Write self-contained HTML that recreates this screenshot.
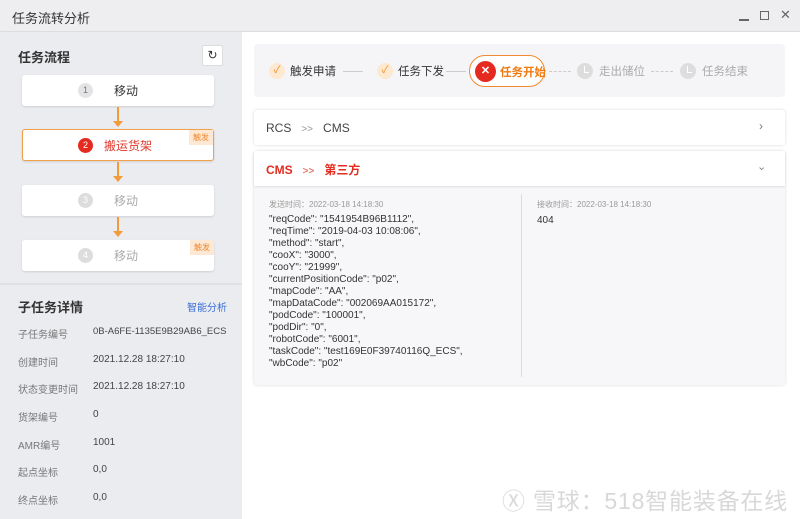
<!DOCTYPE html><html><head><meta charset="utf-8"><style>
*{margin:0;padding:0;box-sizing:border-box}
html,body{width:800px;height:519px;overflow:hidden}
body{background:#fff;font-family:"Liberation Sans","Noto Sans CJK SC",sans-serif;position:relative;color:#333}
.a{position:absolute;white-space:nowrap}
.card{position:absolute;left:22px;width:192px;height:31px;background:#fff;border-radius:3px;box-shadow:0 1px 2px rgba(0,0,0,.12);font-size:12px}
.num{position:absolute;left:56px;top:8px;width:15px;height:15px;border-radius:50%;background:#e4e4e6;color:#777;font-size:9px;text-align:center;line-height:15px}
.ct{position:absolute;left:92px;top:7px}
.tag{position:absolute;right:0;top:0;background:#fde8d4;color:#f08a30;font-size:8px;padding:2px 4px}
.arr{position:absolute;left:117px;width:1.5px;background:#f39a3a}
.ah{position:absolute;left:113px;width:0;height:0;border-left:5px solid transparent;border-right:5px solid transparent;border-top:6px solid #f39a3a}
.lb{position:absolute;left:18px;font-size:10px;color:#777;white-space:nowrap}
.vl{position:absolute;left:93px;font-size:10px;color:#444;white-space:nowrap}
.st{position:absolute;top:63px;font-size:11.5px;display:flex;align-items:center;white-space:nowrap}
.ck{width:16px;height:16px;border-radius:50%;background:#fde8d0;color:#f08a20;font-size:10px;text-align:center;line-height:16px;margin-right:5px}
.gc{width:16px;height:16px;border-radius:50%;background:#ddd;margin-right:6px;position:relative}
.gc:after{content:"";position:absolute;left:7px;top:3px;width:4px;height:6px;border-left:1.5px solid #fff;border-bottom:1.5px solid #fff}
.code{font-size:10px;line-height:12px;color:#333}
</style></head><body>
<div class="a" style="left:0;top:0;width:800px;height:32px;background:#eeeef1;border-bottom:1px solid #ddd"></div>
<div class="a" style="left:12px;top:8px;font-size:13px;color:#333">任务流转分析</div>
<div class="a" style="left:739px;top:19px;width:10px;height:1.5px;background:#666"></div>
<div class="a" style="left:760px;top:11px;width:9px;height:9px;border:1.5px solid #666"></div>
<div class="a" style="left:780px;top:7px;font-size:13px;color:#666">✕</div>
<div class="a" style="left:0;top:32px;width:242px;height:487px;background:#ebecf0"></div>
<div class="a" style="left:0;top:283px;width:242px;height:2px;background:#e0e1e5"></div>
<div class="a" style="left:18px;top:47px;font-size:13px;font-weight:bold">任务流程</div>
<div class="a" style="left:202px;top:45px;width:21px;height:21px;background:#fff;border:1px solid #ddd;border-radius:2px;font-size:12px;text-align:center;line-height:19px">↻</div>
<div class="card" style="top:75px"><div class="num">1</div><div class="ct">移动</div></div>
<div class="arr" style="top:107px;height:15px"></div><div class="ah" style="top:121px"></div>
<div class="card" style="top:129px;height:32px;border:1px solid #f3a04a"><div class="num" style="background:#e52b20;color:#fff;left:55px">2</div><div class="ct" style="color:#e03a2e;left:81px">搬运货架</div><div class="tag">触发</div></div>
<div class="arr" style="top:162px;height:15px"></div><div class="ah" style="top:176px"></div>
<div class="card" style="top:185px;color:#aaa"><div class="num" style="color:#fff;background:#ddd">3</div><div class="ct">移动</div></div>
<div class="arr" style="top:217px;height:15px"></div><div class="ah" style="top:231px"></div>
<div class="card" style="top:240px;color:#aaa"><div class="num" style="color:#fff;background:#ddd">4</div><div class="ct">移动</div><div class="tag">触发</div></div>
<div class="a" style="left:18px;top:297px;font-size:13px;font-weight:bold">子任务详情</div>
<div class="a" style="left:187px;top:299px;font-size:10px;color:#3a6fd8">智能分析</div>
<div class="lb" style="top:326px">子任务编号</div><div class="vl" style="top:326px;font-size:9.5px">0B-A6FE-1135E9B29AB6_ECS</div>
<div class="lb" style="top:354px">创建时间</div><div class="vl" style="top:354px">2021.12.28 18:27:10</div>
<div class="lb" style="top:381px">状态变更时间</div><div class="vl" style="top:381px">2021.12.28 18:27:10</div>
<div class="lb" style="top:409px">货架编号</div><div class="vl" style="top:409px">0</div>
<div class="lb" style="top:437px">AMR编号</div><div class="vl" style="top:437px">1001</div>
<div class="lb" style="top:464px">起点坐标</div><div class="vl" style="top:464px">0,0</div>
<div class="lb" style="top:492px">终点坐标</div><div class="vl" style="top:492px">0,0</div>

<div class="a" style="left:254px;top:44px;width:531px;height:53px;background:#f5f5f8;border-radius:4px"></div>
<div class="st" style="left:269px"><div class="ck">✓</div>触发申请</div>
<div class="a" style="left:343px;top:71px;width:20px;height:1px;background:#ccc"></div>
<div class="st" style="left:377px"><div class="ck">✓</div>任务下发</div>
<div class="a" style="left:446px;top:71px;width:20px;height:1px;background:#ccc"></div>
<div class="a" style="left:469px;top:55px;width:76px;height:32px;border:1.5px solid #f08a30;border-radius:16px;background:#fff"></div>
<div class="st" style="left:475px;top:61px;font-weight:bold;color:#f07a10"><div style="width:21px;height:21px;border-radius:50%;background:#e52b20;color:#fff;font-size:11px;text-align:center;line-height:21px;margin-right:4px">✕</div>任务开始</div>
<div class="a" style="left:549px;top:71px;width:22px;height:0;border-top:1px dashed #ccc"></div>
<div class="st" style="left:577px;color:#aaa"><div class="gc"></div>走出储位</div>
<div class="a" style="left:651px;top:71px;width:22px;height:0;border-top:1px dashed #ccc"></div>
<div class="st" style="left:680px;color:#aaa"><div class="gc"></div>任务结束</div>

<div class="a" style="left:254px;top:110px;width:531px;height:35px;background:#fff;border-radius:3px;box-shadow:0 0 3px rgba(0,0,0,.15)"></div>
<div class="a" style="left:266px;top:121px;font-size:12px;color:#444">RCS&nbsp;&nbsp;&nbsp;<span style="color:#999;font-size:10px">&gt;&gt;</span>&nbsp;&nbsp;&nbsp;CMS</div>
<div class="a" style="left:759px;top:119px;font-size:12px;color:#777">›</div>
<div class="a" style="left:254px;top:151px;width:531px;height:234px;background:#f7f7f9;border-radius:3px;box-shadow:0 0 3px rgba(0,0,0,.15)"></div>
<div class="a" style="left:254px;top:151px;width:531px;height:35px;background:#fff;box-shadow:0 1px 2px rgba(0,0,0,.1)"></div>
<div class="a" style="left:266px;top:161px;font-size:12px;font-weight:bold;color:#e52b20">CMS&nbsp;&nbsp;&nbsp;<span style="color:#e57a70;font-size:10px">&gt;&gt;</span>&nbsp;&nbsp;&nbsp;第三方</div>
<div class="a" style="left:757px;top:160px;font-size:11px;color:#888">⌄</div>
<div class="a" style="left:521px;top:194px;width:1px;height:183px;background:#ddd"></div>
<div class="a" style="left:269px;top:199px;font-size:8px;color:#999">发送时间：2022-03-18 14:18:30</div>
<div class="a" style="left:537px;top:199px;font-size:8px;color:#999">接收时间：2022-03-18 14:18:30</div>
<div class="a" style="left:537px;top:215px;font-size:10px">404</div>
<div class="a code" style="left:269px;top:214px">"reqCode": "1541954B96B1112",<br>"reqTime": "2019-04-03 10:08:06",<br>"method": "start",<br>"cooX": "3000",<br>"cooY": "21999",<br>"currentPositionCode": "p02",<br>"mapCode": "AA",<br>"mapDataCode": "002069AA015172",<br>"podCode": "100001",<br>"podDir": "0",<br>"robotCode": "6001",<br>"taskCode": "test169E0F39740116Q_ECS",<br>"wbCode": "p02"</div>
<div class="a" style="left:502px;top:482px;font-size:23px;color:#d8d8d8;letter-spacing:0.8px">Ⓧ 雪球：518智能装备在线</div>
</body></html>
